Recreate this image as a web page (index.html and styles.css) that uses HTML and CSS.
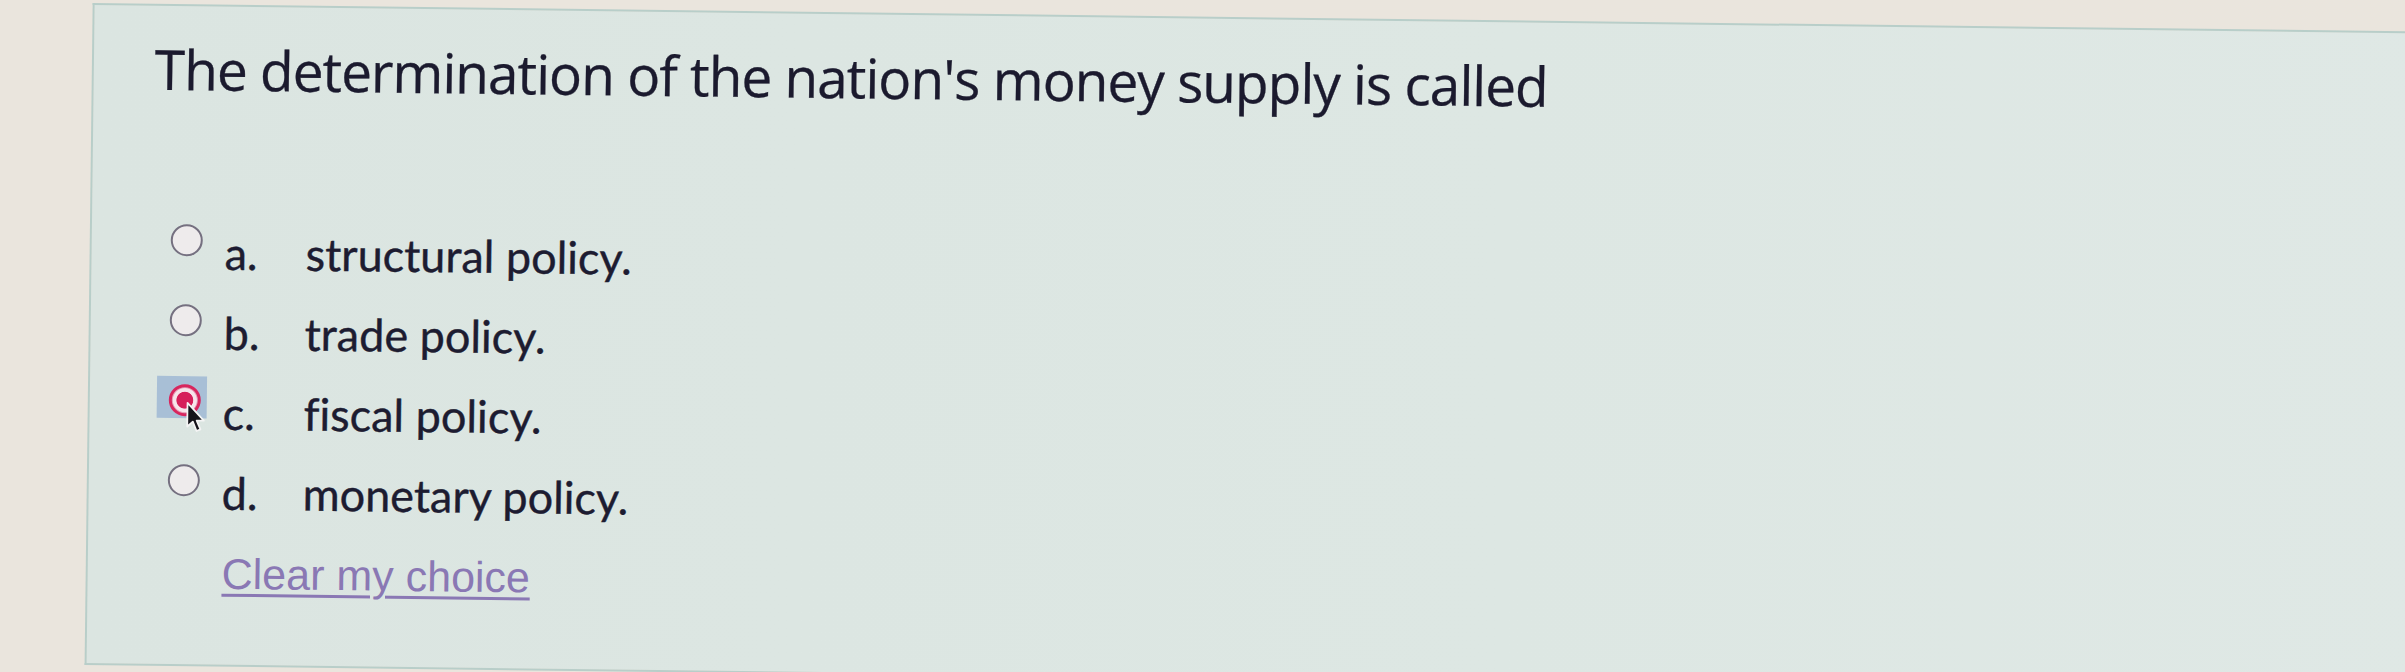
FILE: index.html
```html
<!DOCTYPE html>
<html lang="en">
<head>
<meta charset="utf-8">
<title>Question</title>
<link rel="stylesheet" href="styles.css">
</head>
<body>
<div class="page">
  <div class="panel">
    <h1 class="qtext">The determination of the nation's money supply is called</h1>
    <div class="answers">
      <div class="option">
        <span class="radio"></span>
        <span class="letter">a.</span>
        <span class="label">structural policy.</span>
      </div>
      <div class="option">
        <span class="radio"></span>
        <span class="letter">b.</span>
        <span class="label">trade policy.</span>
      </div>
      <div class="option">
        <span class="radio-box">
          <span class="focus"></span>
          <span class="radio checked"></span>
          <svg class="cursor" viewBox="0 0 18 30" width="20" height="33" aria-hidden="true">
            <path d="M1.5 1.5 L1.5 23 L6.5 18.5 L10 27 L13.5 25.5 L10 17.5 L16.5 17.5 Z" fill="#15141a" stroke="#f4f4f4" stroke-width="1.6" stroke-linejoin="round"/>
          </svg>
        </span>
        <span class="letter">c.</span>
        <span class="label">fiscal policy.</span>
      </div>
      <div class="option">
        <span class="radio"></span>
        <span class="letter">d.</span>
        <span class="label">monetary policy.</span>
      </div>
    </div>
    <a class="clear" href="#">Clear my choice</a>
  </div>
</div>
</body>
</html>
```

FILE: styles.css
```css
html, body {
  margin: 0;
  padding: 0;
}

body {
  background: #eae5dd;
  width: 2405px;
  height: 672px;
  overflow: hidden;
}

.page {
  padding: 3px 0 0 89px;
}

.panel {
  box-sizing: border-box;
  width: 2360px;
  height: 662px;
  background: linear-gradient(90deg, #dbe5e1 0%, #dde7e3 60%, #dfe8e5 100%);
  border: 2px solid #b8cec9;
  border-right: none;
  padding: 30px 0 0 61px;
  transform: rotate(0.7deg);
  transform-origin: 0 300px;
  font-variant-ligatures: none;
}

.qtext {
  margin: 0;
  font-family: "Open Sans", sans-serif;
  font-weight: 400;
  font-size: 55px;
  letter-spacing: -1px;
  line-height: 66px;
  color: #1b1a2e;
  -webkit-text-stroke: 0.3px #1b1a2e;
}

.answers {
  margin-top: 110px;
  display: flex;
  flex-direction: column;
}

.option {
  display: flex;
  align-items: center;
  height: 80px;
  padding-left: 18px;
  font-family: Lato, "Open Sans", sans-serif;
  font-size: 45px;
  line-height: 80px;
  color: #1d1c31;
  -webkit-text-stroke: 0.4px #1d1c31;
}

.radio {
  position: relative;
  box-sizing: border-box;
  flex: none;
  width: 32px;
  height: 32px;
  margin-bottom: 24px;
  border-radius: 50%;
  border: 2.5px solid #757080;
  background: #eeebec;
}

.radio-box {
  position: relative;
  flex: none;
  display: flex;
  width: 32px;
  height: 32px;
  margin-bottom: 24px;
}

.radio-box .radio {
  margin: 0;
}

.focus {
  position: absolute;
  left: -12px;
  top: -8px;
  width: 50px;
  height: 42px;
  background: #a8bfd6;
}

.radio.checked {
  border: 3px solid #d8265e;
  background: radial-gradient(circle, #d61f5a 0 8px, #f7e4ea 8.8px 11.6px, #e6a0b7 12.4px);
}

.cursor {
  position: absolute;
  left: 17px;
  top: 17px;
}

.letter {
  width: 81px;
  margin-left: 22px;
}

.clear {
  display: inline-block;
  margin-top: 11px;
  margin-left: 73px;
  font-family: "Liberation Sans", Arial, sans-serif;
  font-size: 43px;
  line-height: 60px;
  color: #8a78b4;
  text-decoration: underline;
  text-decoration-thickness: 3px;
  text-underline-offset: 5px;
}
```
